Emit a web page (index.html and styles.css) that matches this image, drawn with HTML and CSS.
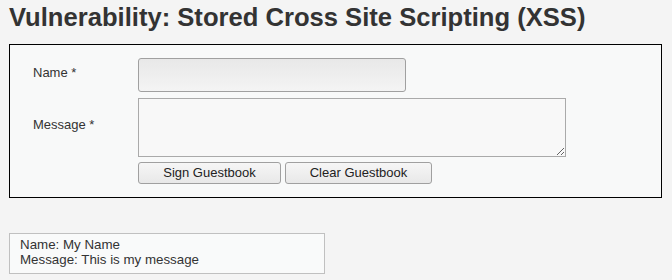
FILE: index.html
```
<!DOCTYPE html>
<html>
<head>
<meta charset="utf-8">
<link rel="stylesheet" href="styles.css">
</head>
<body>
<div class="page">
  <h1 class="title">Vulnerability: Stored Cross Site Scripting (XSS)</h1>
  <div class="code-area">
    <form class="guest-form">
      <label class="label label-name" for="txtName">Name *</label>
      <input class="field-name" id="txtName" type="text">
      <label class="label label-msg" for="mtxMessage">Message *</label>
      <textarea class="field-msg" id="mtxMessage"></textarea>
      <div class="spacer"></div>
      <div class="buttons">
        <button type="button" class="btn btn-sign">Sign Guestbook</button>
        <button type="button" class="btn btn-clear">Clear Guestbook</button>
      </div>
    </form>
  </div>
  <div class="comments">Name: My Name<br>Message: This is my message</div>
</div>
</body>
</html>
```
FILE: styles.css
```
html, body {
  margin: 0;
  padding: 0;
  background: #f4f4f4;
}
body {
  font-family: "Liberation Sans", Arial, sans-serif;
  font-size: 13px;
  color: #333;
}
.page {
  padding: 0 0 0 9px;
}
.title {
  margin: 2px 0 12px 0;
  font-size: 25.6px;
  line-height: 30px;
  font-weight: bold;
  color: #333;
}
.code-area {
  width: 651px;
  border: 1px solid #000;
  background: #f8f9f9;
  padding: 13px 0;
}
.guest-form {
  display: grid;
  grid-template-columns: 105px auto;
  padding-left: 23px;
  align-items: start;
  justify-items: start;
  margin: 0;
}
.label {
  color: #333;
  line-height: 15px;
}
.label-name {
  margin-top: 7px;
}
.label-msg {
  margin-top: 19px;
}
.field-name {
  box-sizing: border-box;
  width: 268px;
  height: 34px;
  margin: 0 0 6px 0;
  border: 1px solid #a0a0a0;
  border-radius: 3px;
  background: linear-gradient(#e8e8e8, #f4f4f4);
  padding: 0 4px;
  font: inherit;
}
.field-msg {
  box-sizing: border-box;
  width: 428px;
  height: 59px;
  margin: 0 0 5px 0;
  border: 1px solid #aaa;
  border-radius: 0;
  background: #f8f8f8;
  padding: 2px;
  font: inherit;
  display: block;
}
.buttons {
  display: flex;
  gap: 4px;
}
.btn {
  box-sizing: border-box;
  height: 22px;
  padding: 0;
  margin: 0;
  border: 1px solid #a0a0a0;
  border-radius: 3px;
  background: linear-gradient(#f6f6f6, #e8e8e8);
  font-family: "Liberation Sans", Arial, sans-serif;
  font-size: 13px;
  color: #222;
  line-height: 20px;
}
.btn-sign {
  width: 143px;
}
.btn-clear {
  width: 147px;
}
.comments {
  box-sizing: border-box;
  width: 316px;
  margin-top: 35px;
  border: 1px solid #c0c0c0;
  background: #f9fafa;
  padding: 3px 10px 6px 10px;
  font-size: 13.33px;
  line-height: 15px;
  color: #333;
}
```
